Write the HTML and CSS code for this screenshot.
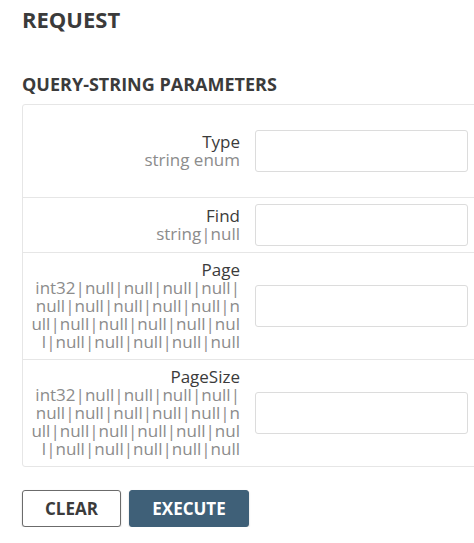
FILE: index.html
```html
<!DOCTYPE html>
<html lang="en">
<head>
    <meta charset="UTF-8">
    <meta name="viewport" content="width=device-width, initial-scale=1.0">
    <title>Request</title>
    <link rel="stylesheet" href="styles.css">
</head>
<body>

    <!-- Request section -->
    <div class="request">
        <h2 class="request-title">REQUEST</h2>

        <h3 class="group-title">QUERY-STRING PARAMETERS</h3>

        <!-- Parameters card -->
        <div class="params">
            <div class="param param-first">
                <div class="param-label">
                    <div class="param-name">Type</div>
                    <div class="param-type">string enum</div>
                </div>
                <input class="param-input" type="text">
            </div>
            <div class="param">
                <div class="param-label">
                    <div class="param-name">Find</div>
                    <div class="param-type">string|null</div>
                </div>
                <input class="param-input" type="text">
            </div>
            <div class="param">
                <div class="param-label">
                    <div class="param-name">Page</div>
                    <div class="param-type">int32|null|null|null|null|null|null|null|null|null|null|null|null|null|null|null|null|null|null|null|null</div>
                </div>
                <input class="param-input" type="text">
            </div>
            <div class="param">
                <div class="param-label">
                    <div class="param-name">PageSize</div>
                    <div class="param-type">int32|null|null|null|null|null|null|null|null|null|null|null|null|null|null|null|null|null|null|null|null</div>
                </div>
                <input class="param-input" type="text">
            </div>
        </div>

        <!-- Actions -->
        <div class="actions">
            <button class="btn btn-clear">CLEAR</button>
            <button class="btn btn-execute">EXECUTE</button>
        </div>
    </div>

</body>
</html>
```

FILE: styles.css
```css
/* Basic Styling */
body {
    margin: 0;
    font-family: "Open Sans", "Segoe UI", sans-serif;
    background-color: #fff;
    color: #3b3b3b;
}

.request {
    padding: 5px 0 0 22px;
}

/* Headings */
.request-title {
    margin: 0;
    font-size: 22px;
    font-weight: 700;
    line-height: 28px;
}

.group-title {
    margin: 40px 0 0;
    font-size: 18px;
    font-weight: 700;
    line-height: 22px;
}

/* Parameters card */
.params {
    margin-top: 9px;
    width: 470px;
    border: 1px solid #e6e6e6;
    border-radius: 3px;
}

.param {
    display: flex;
    align-items: center;
    padding: 6px 0;
    border-top: 1px solid #e6e6e6;
}

.param-first {
    border-top: none;
    padding: 25px 0;
}

.param-label {
    width: 210px;
    margin-left: 7px;
    padding: 2px 0;
    text-align: right;
    font-size: 17px;
    line-height: 18px;
}

.param-name {
    color: #3b3b3b;
}

.param-type {
    color: #8c8c8c;
    word-break: break-all;
}

.param-input {
    width: 213px;
    height: 42px;
    box-sizing: border-box;
    margin-left: 15px;
    border: 1px solid #dcdcdc;
    border-radius: 3px;
    background: #fff;
}

/* Buttons */
.actions {
    display: flex;
    gap: 8px;
    margin-top: 23px;
}

.btn {
    height: 37px;
    font-family: inherit;
    font-size: 17px;
    font-weight: 700;
    border-radius: 3px;
    cursor: pointer;
    box-shadow: 0 1px 2px rgba(0, 0, 0, 0.2);
}

.btn-clear {
    width: 99px;
    background: #fff;
    color: #3b3b3b;
    border: 1px solid #6b6b6b;
}

.btn-execute {
    width: 120px;
    background: #3f6078;
    color: #fff;
    border: 1px solid #3f6078;
}
```
